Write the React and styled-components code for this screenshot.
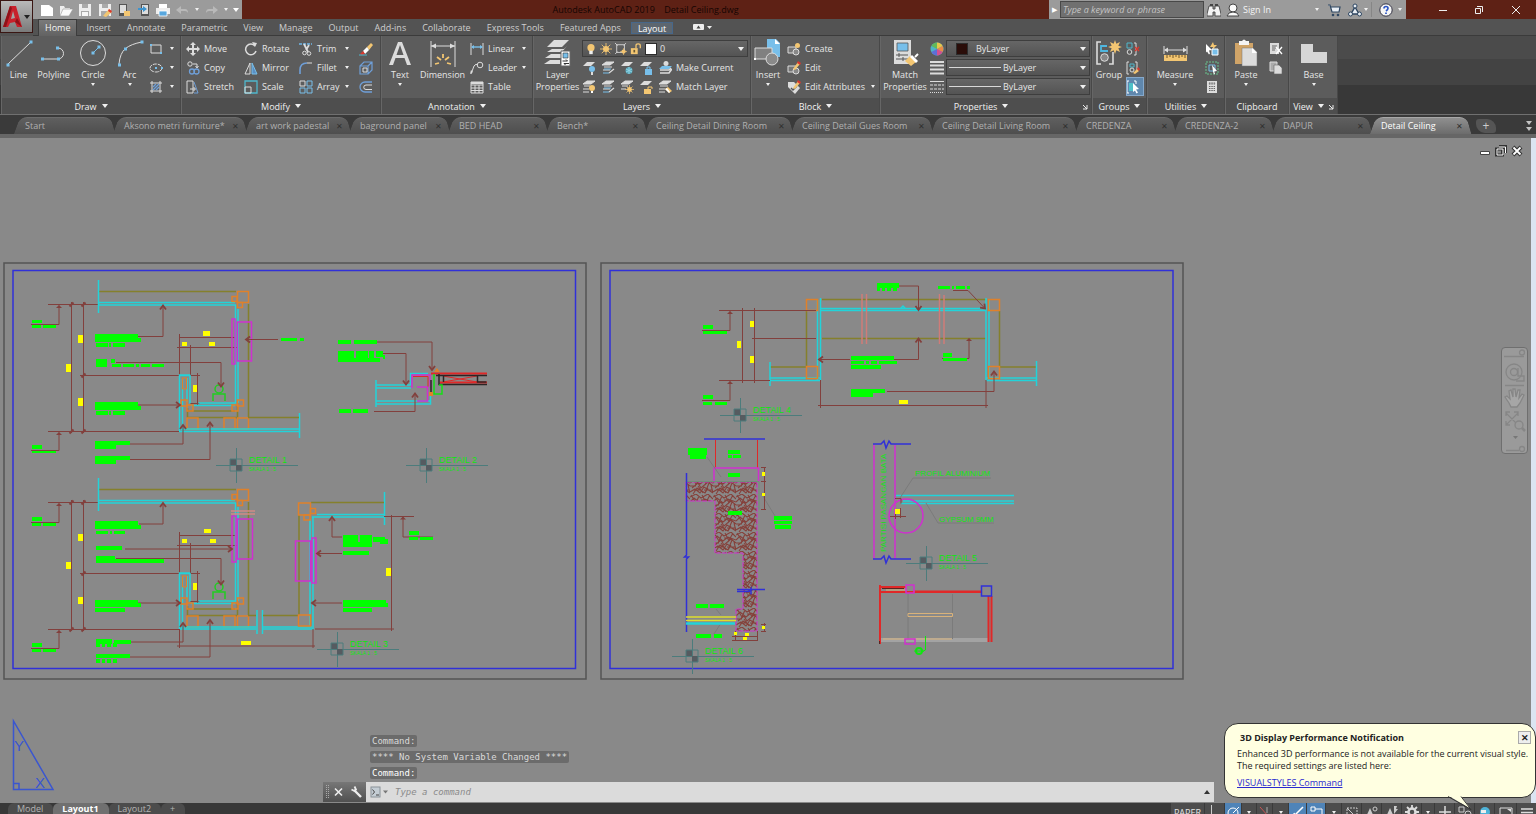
import React, { useState } from 'react';
import styled, { createGlobalStyle, css } from 'styled-components';

const GlobalStyle = createGlobalStyle`
  * {
    box-sizing: border-box;
  }

  body {
    margin: 0;
    overflow: hidden;
    font-family: 'Open Sans', 'Noto Sans', sans-serif;
    font-size: 9px;
    color: #e6e6e6;
    background: #898989;
  }

  button, input, select {
    font: inherit;
    color: inherit;
    border: 0;
    margin: 0;
    padding: 0;
    background: none;
    outline: none;
  }

  svg {
    display: block;
    flex: none;
  }
`;

const Page = styled.div`
  display: flex;
  flex-direction: column;
  height: 100vh;
  position: relative;
  overflow: hidden;
`;

/* ---------- icons ---------- */

const W = '#dcdcdc';
const B = '#78bfea';
const Y = '#f3c672';
const R = '#d8382e';

const icons = {
  // quick access
  newFile: <path d="M1 2h8l4 3v8H1z" fill="#fff" />,
  open: <><path d="M1 13V3h4l1 2h5v2" fill="#eee" /><path d="M1 13l3-7h10l-4 7z" fill="#fafafa" stroke="#999" strokeWidth=".6" /></>,
  save: <><path d="M1 1h12v12H1z" fill="#eee" /><path d="M4 1h6v4H4zM3 8h8v5H3z" fill="#aaa" /><path d="M4 9h6v4H4z" fill="#f7f7f7" /></>,
  saveAs: <><path d="M1 1h12v12H1z" fill="#eee" /><path d="M4 1h6v4H4zM3 8h8v5H3z" fill="#aaa" /><path d="M5 13l6-7 3 3-6 5z" fill={Y} /><path d="M11 6l3 2-1 2-3-2z" fill={R} /></>,
  openWeb: <><path d="M2 1h8v12H2z" fill="#555" /><path d="M3 2h6v8H3z" fill="#ddd" /><path d="M7 8h6v5H7z" fill={Y} /></>,
  saveWeb: <><path d="M4 1h8v12H4z" fill="#555" /><path d="M5 2h6v9H5z" fill="#ddd" /><path d="M1 5h5V3l4 3-4 3V7H1z" fill="#3d94cf" /></>,
  plot: <><path d="M3 1h8v4H3z" fill="#fff" /><path d="M0 5h14v6H0z" fill="#eee" /><path d="M3 8h8v5H3z" fill="#58a7de" stroke="#fff" strokeWidth=".8" /></>,
  undo: <path d="M1 7l5-4v3h4q3 0 3 4-1-2-3-2H6v3z" fill="#b9b9b9" />,
  redo: <path d="M13 7L8 3v3H4q-3 0-3 4 1-2 3-2h4v3z" fill="#b9b9b9" />,
  // draw
  rectangle: <><path d="M2 3h10v8H2z" fill="none" stroke={W} /><path d="M1 2h2v2H1zM11 10h2v2h-2z" fill={B} /></>,
  ellipse: <><ellipse cx="7" cy="7" rx="6" ry="4" fill="none" stroke={W} strokeDasharray="4 1" /><path d="M6 6h2v2H6zM12 6h2v2h-2z" fill={B} /></>,
  hatch: <><path d="M3 1v12M11 1v12M1 3h12M1 11h12" stroke={W} fill="none" /><path d="M4 10l6-6M4 7l3-3M7 10l3-3" stroke="#6f9fd8" strokeWidth="1.4" /></>,
  // modify
  move: <path d="M7 0l3 3H8v3h3V4l3 3-3 3V8H8v3h2l-3 3-3-3h2V8H3v2L0 7l3-3v2h3V3H4z" fill={W} />,
  copy: <><circle cx="4" cy="3" r="2.2" fill="none" stroke={W} /><path d="M7 3h4v3M9.5 5l1.5 2 1.5-2" fill="none" stroke={W} /><circle cx="6" cy="10.5" r="2.5" fill="none" stroke="#6f9fd8" strokeWidth="1.3" /><circle cx="10.5" cy="10.5" r="2.5" fill="none" stroke="#6f9fd8" strokeWidth="1.3" /></>,
  stretch: <><path d="M1 1h6v12H1z" fill="none" stroke={W} /><path d="M8 2l4 11H8" fill="none" stroke="#6f9fd8" /><path d="M4 9h5M7.5 7l2 2-2 2" fill="none" stroke={W} /></>,
  rotate: <><path d="M11 4a5.3 5.3 0 1 0 1 5" fill="none" stroke={W} strokeWidth="1.5" /><path d="M8 0l5 1-2 4z" fill={W} /></>,
  mirror: <><path d="M6 2v11H1z" fill="none" stroke={W} /><path d="M8 2v11h5z" fill="#5a8fc4" stroke={B} /></>,
  scale: <><path d="M1 1h12v12H1z" fill="none" stroke="#4fb7cc" strokeWidth="1.3" /><path d="M1 7h6v6H1z" fill="none" stroke={W} /></>,
  trim: <><path d="M0 2h13" stroke="#6fb7e8" strokeWidth="1.3" strokeDasharray="3 1" /><path d="M5 2l4 8M10 3L7 8" stroke={W} strokeWidth="1.8" /><circle cx="5.5" cy="11" r="1.8" fill="none" stroke={W} /><circle cx="10" cy="11.5" r="1.8" fill="none" stroke={W} /></>,
  fillet: <><path d="M1 13V9q0-7 7-7" fill="none" stroke="#6f9fd8" strokeWidth="1.6" /><path d="M8 2h5" stroke={W} /></>,
  array: <><path d="M1 1h5v5H1z" fill="none" stroke={W} /><path d="M8 1h5v5H8zM1 8h5v5H1zM8 8h5v5H8z" fill="none" stroke={B} /></>,
  erase: <><path d="M8 5l4-4 2 2-4 5z" fill={Y} /><path d="M4 9l4-4 2 3-4 4z" fill="#fff" /><path d="M1 12l3-3 2 3-3 1z" fill={R} /><path d="M0 13h8" stroke="#4fb7cc" /></>,
  explode: <><path d="M1 5h8v8H1zM1 5l4-4h8v8l-4 4M9 5l4-4" fill="none" stroke="#6f9fd8" strokeWidth="1.2" /><path d="M4 7h4v4H4z" fill="none" stroke={W} /></>,
  offset: <><path d="M13 2H6a5 5 0 0 0 0 10h7" fill="none" stroke="#6f9fd8" strokeWidth="1.3" /><path d="M13 5H7a2 2 0 0 0 0 4.5h6" fill="none" stroke={W} /></>,
  // annotation
  linear: <><path d="M1 1v12M13 1v12" stroke={W} /><path d="M2 5h10" stroke={B} strokeWidth="1.4" /><path d="M1 5l3-2v4zM13 5l-3-2v4z" fill={B} /></>,
  leader: <><path d="M1 13l3-8q2-3 4-1" fill="none" stroke={W} /><circle cx="10" cy="4" r="2.8" fill="none" stroke={W} /><path d="M0 13l1-4 2 2z" fill={W} /></>,
  table: <><path d="M1 2h12v11H1zM1 5h12M1 8h12M1 10.5h12M5 5v8M9 5v8" fill="none" stroke={W} /><path d="M1 2h12v2H1z" fill={W} /></>,
  // layer tools
  layIso: <><path d="M5 1h8l-4 4H1z" fill={W} /><circle cx="10" cy="8" r="3" fill={B} /><path d="M9 11h2v3H9z" fill={W} /></>,
  layMatch: <><path d="M5 1h8l-4 3H1zM3 6h8M2 9h7" fill={W} stroke={W} /><path d="M2 12h6M3 8h7" stroke={B} /><path d="M8 12l5-4" stroke={W} strokeWidth="1.3" /></>,
  layFreeze: <><path d="M5 1h8l-4 4H1z" fill={W} /><circle cx="9" cy="9.5" r="3.5" fill="#5aa5b8" /><path d="M9 6v7M6 8l6 3M6 11l6-3" stroke="#8fd5e6" /></>,
  layLock: <><path d="M5 1h8l-4 4H1z" fill={W} /><path d="M6 8h7v6H6z" fill={B} /><path d="M8 8V6h3v2" fill="none" stroke={B} /></>,
  layMake: <><circle cx="8" cy="2.5" r="2.5" fill={W} /><path d="M4 5h10l-3 3H1z" fill={B} /><path d="M2 9h9l2-2M2 12h9l3-4" fill="none" stroke={W} strokeWidth="1.6" /></>,
  layOn: <><path d="M5 1h8l-4 3H1zM2 6h6M1 9h6M1 12h6" fill={W} stroke={W} /><circle cx="10" cy="8" r="3" fill={Y} /><path d="M9 11h2v2H9z" fill="#fff" /></>,
  layThaw: <><path d="M5 1h8l-4 3H1zM2 6h6M1 9h5" fill={W} stroke={W} /><circle cx="9.5" cy="9.5" r="2.4" fill={Y} /><path d="M9.5 5v9M5 9.5h9M6.5 6.5l6 6M12.5 6.5l-6 6" stroke={Y} strokeWidth=".7" /></>,
  layUnlock: <><path d="M5 1h8l-4 4H1z" fill={W} /><path d="M5 9h7v5H5z" fill={Y} /><path d="M9 9V7h4v2" fill="none" stroke={Y} /></>,
  layMatch2: <><path d="M5 1h8l-4 3H1zM2 6h8M1 9h6M1 12h6" fill={W} stroke={W} /><path d="M7 9l3-2 4 4-3 2z" fill={Y} /><path d="M7 9l2-1 3 4-1 1z" fill="#fff" /></>,
  bulb: <><circle cx="7" cy="5.5" r="4.2" fill={Y} /><path d="M5 9h4v4H5z" fill="#eee" /></>,
  sun: <><circle cx="7" cy="7" r="3.5" fill={Y} /><path d="M7 0v14M0 7h14M2 2l10 10M12 2L2 12" stroke={Y} /></>,
  vpFreeze: <><path d="M2 2h9v9H2zM0 0l3 3M13 0l-3 3M0 13l3-3" fill="none" stroke={W} /><circle cx="10" cy="10" r="2.5" fill={Y} /><path d="M10 6v8M6 10h8" stroke={Y} strokeWidth=".8" /></>,
  unlock: <><path d="M1 6h8v7H1z" fill={Y} /><path d="M7 6V3q0-2 2.5-2T12 3v3" fill="none" stroke={Y} strokeWidth="1.5" /><path d="M4 8h2v3H4z" fill="#6b5a33" /></>,
  // block
  create: <><path d="M1 5h8v6H1z" fill="#777" stroke={W} /><circle cx="9" cy="10" r="3" fill="#888" stroke={W} /><circle cx="10.5" cy="3.5" r="2.5" fill={Y} /></>,
  edit: <><path d="M1 5h8v6H1z" fill="#777" stroke={W} /><circle cx="9" cy="10" r="3" fill="#888" stroke={W} /><path d="M6 8l5-7 2 2-5 6z" fill={Y} /><path d="M11 0l3 2-1 2-3-2z" fill={R} /></>,
  editAttr: <><path d="M1 2h6l6 6-5 6-7-7z" fill={W} /><path d="M4 8l2 2 4-4" fill="none" stroke="#555" strokeWidth="1.4" /><path d="M6 8l5-7 2 2-5 6z" fill={Y} /><path d="M11 0l3 2-1 2-3-2z" fill={R} /></>,
  // properties
  wheel: <><circle cx="7" cy="7" r="6.5" fill="#4fb3c8" /><path d="M7 7V.5A6.5 6.5 0 0 1 12.6 4z" fill="#e6c64b" /><path d="M7 7l5.6-3a6.5 6.5 0 0 1 0 6z" fill="#ea8a45" /><path d="M7 7l5.6 3A6.5 6.5 0 0 1 7 13.5z" fill="#d4508f" /><path d="M7 7v6.5A6.5 6.5 0 0 1 1.4 10z" fill="#5e6fd6" /><path d="M7 7L1.4 4A6.5 6.5 0 0 1 7 .5z" fill="#62b85a" /></>,
  weight: <path d="M0 1h14M0 4.5h14M0 8.5h14M0 12.5h14" stroke={W} strokeWidth="2" />,
  ltype: <><path d="M0 1.5h14" stroke={W} /><path d="M0 5h14M0 9h14" stroke={W} strokeDasharray="3 1" /><path d="M0 12.5h14" stroke={W} strokeDasharray="1 1" /></>,
  // groups
  ungroup: <><path d="M1 1h5v5H1z" fill="none" stroke="#4fb7cc" /><circle cx="3.5" cy="10" r="2.3" fill="none" stroke={W} /><path d="M8 1h2v12H8" fill="none" stroke={W} /><path d="M9 5l4 4M13 5L9 9" stroke={R} strokeWidth="1.4" /></>,
  groupEdit: <><path d="M3 1H1v12h2M9 1h2v8" fill="none" stroke={W} /><path d="M4 3h4v3H4z" fill="none" stroke="#4fb7cc" /><circle cx="6" cy="9" r="2" fill="none" stroke={W} /><path d="M7 12l4-4 2 2-4 3z" fill={Y} /><path d="M11 8l1-2 2 2-1 2z" fill={R} /></>,
  groupPick: <><path d="M3 1H1v12h2M8 1h2v3" fill="none" stroke="#fff" /><path d="M3 3h4v8H3z" fill="#4fc0c8" /><path d="M7 3l6 6-3 .5 2 3-1.5 1-1.5-3L7 12z" fill="#fff" /></>,
  // utilities
  quickSel: <><path d="M1 2l6 6-3 .5 1 3-1 1-2-3-1 1z" fill="#fff" /><path d="M8 0L5 5h3L7 8l5-5H9z" fill={Y} /><path d="M7 7h6v6H7z" fill={B} stroke="#fff" /></>,
  selAll: <><path d="M1 1h12v12H1z" fill="none" stroke="#67c58e" strokeDasharray="2 1" /><path d="M4 4h6v6H4z" fill="none" stroke={B} /><path d="M7 4l5 6-3 .5 1 2-1 1-1-3z" fill="#fff" /></>,
  calc: <><path d="M2 1h10v12H2z" fill={W} /><path d="M4 3h6v1H4zM4 6.5h6M4 8.5h6M4 10.5h6" stroke="#666" fill="none" strokeDasharray="1.5 .8" /></>,
  // clipboard
  cut: <><path d="M1 1h9v11H1z" fill={W} /><path d="M3 4h5M3 6h4M3 8h3" stroke="#666" /><path d="M7 5l6 7M13 5l-6 7" stroke="#fff" strokeWidth="1.3" /></>,
  copyClip: <><path d="M1 1h7v9H1z" fill="#aaa" stroke={W} /><path d="M5 4h5l3 3v6H5z" fill={W} stroke="#666" strokeWidth=".6" /></>,
  // info center
  find: <><path d="M2 3h4v3h2V3h4l2 8v2H8V9H6v4H0v-2z" fill="#f2f2f2" stroke="#444" strokeWidth=".9" /><path d="M3 1h3v2H3zM8 1h3v2H8z" fill="#444" /></>,
  user: <><circle cx="7" cy="5" r="4" fill="#fafafa" stroke="#444" /><path d="M1 13q1-4 6-4t6 4z" fill="#fafafa" stroke="#444" /></>,
  cart: <><path d="M1 2h2l2 7h7l1-5H4" fill="#e8eef4" stroke="#2e4661" strokeWidth="1.2" /><circle cx="6" cy="12" r="1.3" fill="#2e4661" /><circle cx="11" cy="12" r="1.3" fill="#2e4661" /></>,
  a360: <><path d="M7 4l4 7H3z" fill="#e8eef4" stroke="#2e4661" strokeWidth="1.4" /><circle cx="7" cy="3" r="2" fill="#e8eef4" stroke="#2e4661" /><circle cx="2.5" cy="11" r="2" fill="#e8eef4" stroke="#2e4661" /><circle cx="11.5" cy="11" r="2" fill="#e8eef4" stroke="#2e4661" /></>,
  help: <><circle cx="7" cy="7" r="6.2" fill="#f6f6f6" stroke="#334" /><path d="M5 5.5q0-2 2-2t2 1.7Q9 6.5 7 8M7 9.5v1.5" fill="none" stroke="#2c55c4" strokeWidth="1.7" /></>,
  // big ribbon icons
  line: <><path d="M3 25L26 3" stroke={W} fill="none" /><path d="M1.5 24.5h3v3h-3zM24.5 1.5h3v3h-3z" fill={B} /></>,
  polyline: <><path d="M2 20h16a5.5 5.5 0 0 0 0-11" fill="none" stroke={W} /><path d="M1 18.5h3v3H1zM17 18.5h3v3h-3zM16 7.5h3v3h-3z" fill={B} /></>,
  circle: <><circle cx="14" cy="14" r="12.5" fill="none" stroke={W} /><path d="M14 14l6-6" stroke={B} /><path d="M12.5 12.5h3v3h-3zM18.5 6.5h3v3h-3z" fill={B} /></>,
  arc: <><path d="M3 25Q4 14 9.5 9.5T26 3" fill="none" stroke={W} /><path d="M2 24.5h3v3H2zM8 8.5h3v3H8zM24.5 1.5h3v3h-3z" fill={B} /></>,
  text: <path d="M12 3h4l9 23h-4l-2.5-7h-9L7 26H3zM10.5 16h7L14 6z" fill={W} />,
  dimension: <><path d="M2 2v26M26 2v26M2 7h24" stroke={W} fill="none" /><path d="M2 7l5-2.5v5zM26 7l-5-2.5v5z" fill={W} /><path d="M6 25l4-1M8 18l4 3M14 15v4M20 18l-4 3M22 25l-4-1" stroke={Y} strokeWidth="1.8" /></>,
  layerProps: <><path d="M10 1h15l-7 7H3z" fill={W} /><path d="M8 10h12l3-3-5 6H3zM7 15h10v4H1zM6 21h10v4H0z" fill={W} /><path d="M17 12h9v15h-9z" fill="#fff" stroke="#666" /><path d="M19 14h5v5h-5z" fill={B} stroke="#333" strokeWidth=".6" /><path d="M18.5 22h5l-1.5-1.5M25 24.5h-5l1.5 1.5" fill="none" stroke="#333" /></>,
  insert: <><path d="M13 0h9l4 4v14H13z" fill={B} /><path d="M21 0l5 5h-5z" fill="#fff" /><path d="M1 9h17v11H1z" fill="#808080" stroke={W} /><circle cx="18" cy="20" r="6" fill="#8a8a8a" stroke={W} /><path d="M0 19h2v2H0z" fill="#fff" /></>,
  matchProps: <><path d="M3 1h17v24H3z" fill={W} /><path d="M6 4h11v8H6z" fill={B} stroke="#555" strokeWidth=".8" /><path d="M5 16h12M5 20h12M8 14v4M12 18v4" stroke="#555" /><path d="M14 22l5-5 6 6-5 4z" fill={Y} /><path d="M19 18l6 6 2-2-6-6z" fill="#fff" /><path d="M24 18l3-3" stroke="#fff" strokeWidth="2" /></>,
  group: <><path d="M6 3H2v22h4M14 25h4V13" fill="none" stroke={W} strokeWidth="1.6" /><path d="M12 7H6v5h7" fill="none" stroke="#4fb7e0" strokeWidth="1.8" /><circle cx="9.5" cy="18.5" r="3.8" fill="#888" stroke={W} /><path d="M20 1l1.3 3.7L25 3l-1.700 3.700L27 8l-3.700 1.300L25 13l-3.700-1.700L20 15l-1.300-3.700L15 13l1.700-3.700L13 8l3.700-1.300L15 3l3.700 1.700z" fill={Y} /></>,
  measure: <><path d="M3 7v8M26 7v8M4 11h21" stroke={W} /><path d="M3 11l4-2.5v5zM26 11l-4-2.5v5z" fill={W} /><path d="M3 16h23v6H3z" fill={Y} /><path d="M6 16v3M9 16v2M12 16v3M15 16v2M18 16v3M21 16v2M24 16v3" stroke="#705426" /></>,
  paste: <><path d="M3 4h18v21H3z" fill="#d0a468" /><path d="M7 2h3q2-3 4 0h3v4H7z" fill="#f4f4f4" /><path d="M10 9h11l4 4v14H10z" fill={W} stroke="#777" strokeWidth=".5" /><path d="M20 9v5h5z" fill="#fff" /></>,
  base: <path d="M1 5h12v8h14v11H1z" fill="#d6d6d6" />,
};

const Icon = ({ name, size = 14 }) => {
  const box = size > 20 ? 28 : 14;
  return (
    <svg width={size} height={size} viewBox={`0 0 ${box} ${box}`} aria-hidden="true">
      {icons[name]}
    </svg>
  );
};

const Caret = styled.span`
  flex: none;
  width: 0;
  height: 0;
  border: ${(p) => p.$size || 2}px solid transparent;
  border-top: ${(p) => (p.$size || 2) + 1}px solid ${(p) => p.$color || '#f0f0f0'};
  border-bottom: 0;
`;

/* ---------- title bar ---------- */

const Header = styled.header`
  display: grid;
  grid-template-columns: 33px 1fr;
  grid-template-rows: 19px 17px;
  background: #535353;
`;

const AppButton = styled.button`
  grid-row: 1 / 3;
  height: 33px;
  display: flex;
  align-items: center;
  justify-content: center;
  gap: 1px;
  background: linear-gradient(#b9b9b9, #7a7a7a);
  border: 1px solid #3a1613;
`;

const TitleBar = styled.div`
  display: flex;
  align-items: stretch;
  background: #5e2115;
`;

const QuickAccess = styled.div`
  display: flex;
  align-items: center;
  gap: 4px;
  width: 209px;
  padding: 0 3px 0 6px;
  background: #9b9b9b;
`;

const QuickButton = styled.button`
  display: flex;
  align-items: center;
  justify-content: center;
  width: ${(p) => (p.$narrow ? 6 : 16)}px;
`;

const WindowTitle = styled.h1`
  flex: 1;
  margin: 0;
  text-align: center;
  font-size: 9px;
  font-weight: 400;
  line-height: 19px;
  white-space: pre;
  color: #150503;
`;

const InfoCenter = styled.div`
  display: flex;
  align-items: center;
  width: 357px;
  background: #9b9b9b;
`;

const SearchToggle = styled.button`
  width: 11px;
  height: 19px;
  font-size: 7px;
  color: #fff;
`;

const SearchInput = styled.input`
  width: 144px;
  height: 17px;
  padding: 0 2px;
  font-style: italic;
  background: #707070;
  border: 1px solid #484848;

  &::placeholder {
    color: #c4c4c4;
    opacity: 1;
  }
`;

const InfoButton = styled.button`
  display: flex;
  align-items: center;
  justify-content: ${(p) => (p.$split ? 'space-between' : 'center')};
  width: ${(p) => p.$w || 19}px;
  height: ${(p) => (p.$h || 19)}px;
  padding: ${(p) => (p.$split ? '0 4px 0 7px' : 0)};
  border-left: ${(p) => (p.$split ? '1px solid #868686' : 0)};
  color: #f5f5f5;
`;

const SignIn = styled.button`
  flex: 1;
  display: flex;
  align-items: center;
  justify-content: space-between;
  padding: 0 4px 0 1px;
  color: #f5f5f5;
`;

const WindowButtons = styled.div`
  display: flex;
  width: 130px;
  padding: 0 2px 0 19px;

  button {
    flex: 1;
    display: flex;
    align-items: center;
    justify-content: center;
  }
`;

const RibbonTabs = styled.nav`
  display: flex;
  align-items: stretch;
  gap: 2px;
  padding-left: 5px;
  border-bottom: 1px solid #3b3b3b;
`;

const RibbonTab = styled.button`
  padding: 0 6px;
  line-height: 16px;
  color: #cecece;
  white-space: nowrap;
  border: 1px solid transparent;
  border-bottom: 0;
  ${(p) => p.$active && css`
    color: #f4f4f4;
    background: linear-gradient(#7a7a7a, #626262);
    border-color: #3c3c3c;
    margin-bottom: -1px;
  `}
  ${(p) => p.$context && css`
    color: #fff;
    line-height: 12px;
    margin: 3px 8px 1px 1px;
    background: #5d666f;
    border: 1px solid #47678a;
  `}
`;

/* ---------- ribbon ---------- */

const Ribbon = styled.div`
  display: flex;
  height: 79px;
  padding-left: 1px;
  background: linear-gradient(#4b4b4b 0 23px, #434343 23px 49px, #383838 49px);
  border-bottom: 1px solid #707070;
`;

const Panel = styled.section`
  display: flex;
  flex-direction: column;
  width: ${(p) => p.$w}px;
  flex: none;
  background: #5c5c5c;
  border-right: 1px solid #484848;
  border-left: 1px solid #666;
`;

const PanelBody = styled.div`
  flex: 1;
  display: flex;
  align-items: flex-start;
  padding-top: 3px;
`;

const PanelTitle = styled.button`
  position: relative;
  display: flex;
  align-items: center;
  justify-content: center;
  gap: 5px;
  height: 16px;
  padding-right: ${(p) => (p.$launcher ? 10 : 0)}px;
  background: #4e4e4e;
  color: #f0f0f0;
`;

const Launcher = styled.svg`
  position: absolute;
  right: 3px;
  top: 6px;
`;

const BigTool = styled.button`
  width: ${(p) => p.$w}px;
  flex: none;
  display: flex;
  flex-direction: column;
  align-items: center;
  line-height: 12px;
  white-space: pre;

  span {
    margin-top: 2px;
  }
`;

const ToolColumn = styled.div`
  display: flex;
  flex-direction: column;
  width: ${(p) => p.$w}px;
  flex: none;
  margin-left: ${(p) => p.$ml || 0}px;
`;

const Tool = styled.button`
  display: flex;
  align-items: center;
  gap: 4px;
  height: 19px;
  white-space: nowrap;
  ${(p) => p.$on && css`
    background: #5f87ad;
    outline: 1px solid #86a9cb;
    outline-offset: -1px;
  `}

  ${Caret} {
    margin-left: auto;
  }
`;

const ToolRow = styled.div`
  display: flex;
  gap: 5px;
`;

const Combo = styled.div`
  display: flex;
  align-items: center;
  gap: ${(p) => p.$gap || 3}px;
  height: 17px;
  margin: 1px 0;
  padding: 0 3px 0 ${(p) => p.$pl || 2}px;
  background: linear-gradient(#666, #545454);
  border: 1px solid #3e3e3e;

  select {
    flex: 1;
    min-width: 0;
    appearance: none;
  }
`;

const Swatch = styled.span`
  width: 12px;
  height: 12px;
  background: ${(p) => p.$color};
  border: 1px solid #2c2c2c;
`;

const Rule = styled.span`
  width: 52px;
  height: 1px;
  background: #d8d8d8;
`;

/* ---------- file tabs ---------- */

const FileTabs = styled.nav`
  display: flex;
  height: 23px;
  padding: 2px 4px 0 16px;
  background: #3a3a3a;
  border-bottom: 4px solid #666;
`;

const FileTab = styled.div`
  position: relative;
  display: flex;
  align-items: center;
  justify-content: space-between;
  width: ${(p) => p.$w}px;
  flex: none;
  padding: 0 8px 0 9px;
  color: ${(p) => (p.$active ? '#fff' : '#b0b0b0')};
  white-space: nowrap;

  &::before,
  &::after {
    content: '';
    position: absolute;
    top: 0;
    bottom: 0;
    background: ${(p) => (p.$active ? 'linear-gradient(#8f8f8f, #6c6c6c)' : 'linear-gradient(#5f5f5f, #4e4e4e)')};
    border-top: 1px solid ${(p) => (p.$active ? '#a8a8a8' : '#6b6b6b')};
  }
  &::before {
    left: 1px;
    right: 20px;
    border-radius: 7px 0 0 0;
    transform: skewX(-20deg);
  }
  &::after {
    right: 2px;
    width: 40px;
    border-radius: 0 7px 0 0;
    transform: skewX(16deg);
  }

  button {
    position: relative;
    z-index: 1;
  }
`;

const CloseTab = styled.button`
  font-size: 8px;
  line-height: 10px;
  color: #303030;
`;

const AddTab = styled.button`
  width: 20px;
  height: 14px;
  margin: 2px 0 0 5px;
  font-size: 12px;
  line-height: 12px;
  color: #ccc;
  background: #555;
  border-radius: 3px 9px 3px 9px;
`;

const TabOverflow = styled.button`
  margin-left: auto;
  display: flex;
  flex-direction: column;
  justify-content: center;
  gap: 2px;
`;

/* ---------- drawing area ---------- */

const Workspace = styled.main`
  flex: 1;
  min-height: 0;
  position: relative;
  background: #898989;
  border-right: 5px solid #dbe5f2;
  overflow: hidden;
`;

const Drawing = styled.svg`
  width: 100%;
  height: 100%;
`;

const DocButtons = styled.div`
  position: absolute;
  top: 7px;
  right: 8px;
  display: flex;
  gap: 4px;
`;

const NavBar = styled.div`
  position: absolute;
  top: 209px;
  right: 3px;
  width: 27px;
  height: 107px;
  background: #9a9a9a;
  border: 1px solid #6f6f6f;
  border-radius: 4px;
`;

const CommandDock = styled.div`
  position: absolute;
  left: 323px;
  right: 317px;
  bottom: 1px;
  font-family: 'DejaVu Sans Mono', 'Liberation Mono', monospace;
`;

const History = styled.div`
  display: flex;
  flex-direction: column;
  align-items: flex-start;
  gap: 4px;
  margin: 0 0 3px 47px;
`;

const HistoryLine = styled.code`
  padding: 0 2px;
  font: inherit;
  line-height: 12px;
  white-space: pre;
  color: ${(p) => (p.$last ? '#fff' : '#dadada')};
  background: #6b6b6b;
  border-radius: 2px;
`;

const CommandBar = styled.div`
  display: flex;
  align-items: center;
  height: 20px;
  background: linear-gradient(#777, #505050);

  input {
    flex: 1;
    align-self: stretch;
    padding: 0 4px;
    font-style: italic;
    color: #333;
  }
  input::placeholder {
    color: #8b8b8b;
    opacity: 1;
  }
`;

const CommandField = styled.div`
  flex: 1;
  align-self: stretch;
  display: flex;
  align-items: center;
  gap: 3px;
  padding: 0 4px;
  background: #dbdbdb;
`;

/* ---------- status bar ---------- */

const StatusBar = styled.footer`
  display: flex;
  align-items: flex-start;
  justify-content: space-between;
  height: 11px;
  overflow: hidden;
  background: #383838;
  padding-left: 8px;
`;

const StatusGroup = styled.div`
  display: flex;
`;

const LayoutTab = styled.button`
  height: 15px;
  padding: 0 10px 3px 9px;
  line-height: 12px;
  color: ${(p) => (p.$active ? '#fff' : '#b4b4b4')};
  font-weight: ${(p) => (p.$active ? 700 : 400)};
  background: ${(p) => (p.$active ? '#707070' : '#4c4c4c')};
  border-radius: 6px 6px 0 0;
`;

const StatusButton = styled.button`
  display: flex;
  align-items: center;
  justify-content: center;
  width: ${(p) => p.$w || 20}px;
  height: 18px;
  color: #e4e4e4;
  background: ${(p) => (p.$on ? '#4f84b8' : '#4d4d4d')};
  border-left: 1px solid #3a3a3a;
`;

const Balloon = styled.aside`
  position: absolute;
  right: 0;
  bottom: 16px;
  width: 312px;
  padding: 6px 11px 8px 12px;
  color: #222;
  background: #ffffe1;
  border: 1px solid #333;
  border-radius: 14px;

  p {
    margin: 0;
    line-height: 12px;
    white-space: nowrap;
  }
  a {
    display: block;
    margin-top: 5px;
    line-height: 12px;
    color: #2a2ad0;
  }
`;

const BalloonHead = styled.div`
  display: flex;
  align-items: center;
  justify-content: space-between;
  height: 15px;
  margin: 0 -7px 3px 3px;
  font-weight: 700;

  button {
    width: 13px;
    height: 13px;
    font-size: 9px;
    line-height: 10px;
    background: #eee;
    border: 1px solid #aaa;
    font-weight: 700;
  }
`;

const BalloonTail = styled.svg`
  position: absolute;
  left: 222px;
  top: 100%;
  margin-top: -1px;
`;

/* ---------- drawing parts ---------- */

const BROWN = '#82403d';
const CYAN = '#22d3d9';
const OLIVE = '#85802c';
const ORANGE = '#e0812a';
const MAGENTA = '#cf30cf';
const GREEN = '#00ff00';
const TEXT_GREEN = '#0fe60f';
const BLUE = '#3030d8';

const Blocks = ({ list, fill = GREEN }) => list.map(([x, y, w, h]) => (
  <rect key={`${x}-${y}`} x={x} y={y} width={w} height={h} fill={fill} />
));

const Boxes = ({ list, stroke = ORANGE }) => list.map(([x, y, w, h]) => (
  <rect key={`${x}-${y}`} x={x} y={y} width={w} height={h} fill="none" stroke={stroke} strokeWidth="1.5" />
));

const Lines = ({ d, stroke, width = 1, dash }) => (
  <path d={d} fill="none" stroke={stroke} strokeWidth={width} strokeDasharray={dash} />
);

const Leaders = ({ list, head = 'arrow' }) => list.map((d) => (
  <path key={d} d={d} fill="none" stroke={BROWN} markerEnd={`url(#${head})`} />
));

const Marker = ({ x, y, n }) => (
  <g>
    <path d={`M${x - 20} ${y + 0.5}h82M${x + 0.5} ${y - 17}v35`} stroke="#4c7c7c" />
    <path d={`M${x - 6} ${y - 6}h6v6h-6zM${x} ${y}h6v6h-6z`} fill="#555b60" />
    <path d={`M${x - 6} ${y - 6}h12v12h-12z`} fill="none" stroke="#4c7c7c" />
    <text x={x + 13} y={y - 2} fontSize="9" fill={TEXT_GREEN}>DETAIL {n}</text>
    <text x={x + 13} y={y + 6} fontSize="5" fill={TEXT_GREEN}>SKALA 1 : 5</text>
  </g>
);

// Wall niche section, shared by details 1 and 3
const Niche = ({ dy = 0 }) => (
  <g transform={`translate(0 ${dy})`}>
    <Lines stroke={BROWN} d="M48 304.500h50M48 431.500h131M71.500 302v131M83.500 302v131M80 375.500h120M179 337.500h56M177 347.500h60M179.500 334v41M190.500 345v30M197.500 373v32M190 403.500h10" />
    <Leaders head="level" list={['M31 324.500h28v-19', 'M31 450.500h28v-18']} />
    <Lines stroke={BROWN} width={2} d="M69.500 306.500l4-4M81.500 306.500l4-4M69.500 433.500l4-4M81.500 433.500l4-4M81.500 377.500l4-4" />
    <Lines stroke={OLIVE} width={1.5} d="M99 291.500h137M248.500 304v113M187 411h48M187 417.500h50M187.500 408v10M237.500 405v14" />
    <Lines stroke={CYAN} width={1.5} d="M98.500 280v33M98 302.500h137M98 305h138M235.500 305v98h-37M238 309v94M179.500 431V375.500h10.500v28M182.500 431v-52M187 378v24M191 405.500h44M179 375h11" />
    <Boxes list={[[237.5, 291.5, 11, 11], [232, 296.5, 5, 5], [237.5, 302.5, 5, 5], [181, 400, 6, 6], [187, 405, 6, 6], [232, 405, 6, 6], [237.5, 400, 6, 6], [187, 418, 11, 11], [224, 418, 11, 11], [237.5, 418, 11, 11]]} />
    <Lines stroke={ORANGE} d="M182.500 378h4v11h-4z" />
    <Lines stroke="#22cc22" width={1.5} d="M213 401v-7h12v7" />
    <circle cx="219" cy="389" r="4" fill="none" stroke="#22cc22" strokeWidth="1.5" />
  </g>
);

const zig = (x, y) => `M${x} ${y}h8l3-3 2 7 3-7 2 3h20`;

const Sheets = () => (
  <g fontFamily="'Liberation Sans', sans-serif">
    <defs>
      <marker id="arrow" markerUnits="userSpaceOnUse" markerWidth="10" markerHeight="10" refX="7" refY="5" orient="auto">
        <path d="M3 2l4 3-4 3" fill="none" stroke={BROWN} strokeWidth="1.8" />
      </marker>
      <marker id="level" markerUnits="userSpaceOnUse" markerWidth="10" markerHeight="10" refX="7" refY="5" orient="auto">
        <path d="M4.500 2L7.500 5l-3 3z" fill={BROWN} />
      </marker>
      <pattern id="stone" width="23" height="19" patternUnits="userSpaceOnUse">
        <path
          d="M0 3l6-3 5 4 7-4 5 5M0 8l4-4 6 5 5-4 8 3M2 13l6-5 3 5 7-6 5 4M0 17l5-3 5 4 4-6 9 6M3 19l4-6 8 5 3-5M1 1l5 8M9 2l-4 9M12 1l4 8M20 1l-5 9M8 11l5 7M19 8l-4 10M21 10l2 8M0 11h6M11 6h7M4 15h7M14 15h8"
          fill="none"
          stroke="#85403a"
          strokeWidth="1.1"
        />
      </pattern>
    </defs>

    <Boxes stroke="#545454" list={[[4, 263, 582, 416], [601, 263, 582, 416]]} />
    <Boxes stroke={BLUE} list={[[13, 270.5, 562.5, 398], [610, 270.5, 563, 398]]} />

    {/* Detail 1 */}
    <Niche />
    <Lines stroke={CYAN} width={1.5} d="M179 429h120M179 431.500h120M299.500 413v25" />
    <Lines stroke={OLIVE} width={1.5} d="M248 417.500h51" />
    <Boxes stroke={MAGENTA} list={[[232, 319, 3, 45], [237.5, 322, 14, 39]]} />
    <Leaders list={['M137 336.500h26v-31', 'M116 362.500h105v24', 'M138 405h42', 'M130 444h53v-19', 'M130 459.500h80v-37', 'M278 339.500h-32']} />
    <Blocks list={[
      [32, 320, 10, 3], [32, 325, 9, 3], [43, 325, 13, 3], [32, 445, 10, 4], [32, 451, 24, 2],
      [95, 334, 43, 5], [95, 338, 46, 4], [96, 343, 12, 4], [109, 343, 2, 4], [113, 343, 12, 4],
      [96, 359, 11, 8], [111, 359, 4, 4], [112, 364, 9, 3], [123, 364, 11, 3], [136, 364, 3, 3], [141, 364, 9, 3], [152, 364, 12, 3],
      [95, 402, 43, 5], [95, 406, 46, 4], [96, 411, 12, 4], [109, 411, 2, 4], [113, 411, 12, 4],
      [95, 441, 35, 4], [95, 445, 21, 4], [95, 456, 35, 4], [95, 460, 21, 4],
      [281, 338, 16, 3], [300, 338, 4, 3],
    ]} />
    <Blocks fill="#ffff00" list={[[78, 335, 5, 8], [66, 364, 5, 8], [78, 398, 5, 8], [203, 331, 7, 5], [182, 342, 5, 4], [209, 342, 6, 4], [193, 385, 4, 7]]} />
    <Marker x={236} y={465} n={1} />

    {/* Detail 2 */}
    <Lines stroke={CYAN} width={1.5} d="M376 380v27M376 385h34.500V373.500H428M376 388h35M376 401h54M376 404h54.500v-10" />
    <Lines stroke={MAGENTA} width={1.5} d="M412 388v-13h18v12M417 387h10.500v14H417" />
    <Lines stroke="#e02828" d="M413 376.500h15v10" />
    <Lines stroke="#e02828" width={2} d="M431 373.500h56M440 382.500h47" />
    <Lines stroke="#e02828" d="M443 376l34 6M443 382l34-6" />
    <Lines stroke="#2c2525" width={1.5} d="M431 380v12M439 374v10.500h48M443.500 376v6M436 375.500h51M477.500 376v6h9" />
    <Lines stroke="#16e016" width={1.5} d="M434 374v20h8v-9h-3" />
    <path d="M434 372l3-4 3 4zM429 392h4v4h-4z" fill={ORANGE} />
    <Leaders list={['M377 342h55v28', 'M383 353.500h23v31', 'M374 411.500h41v-18']} />
    <Blocks list={[[338, 340, 13, 4], [354, 340, 23, 4], [338, 351, 16, 8], [356, 351, 12, 7], [369, 351, 5, 7], [376, 351, 7, 6], [338, 358, 42, 4], [383, 355, 2, 4], [339, 409, 12, 4], [353, 409, 15, 4]]} />
    <Marker x={426} y={465} n={2} />

    {/* Detail 3 */}
    <Niche dy={198} />
    <Lines stroke={CYAN} width={1.5} d="M179 627h77M263 627h49M179 629h77M263 629h50V517M310 519v108M312 517h72M317 514.500h67M384.500 492v33M257 610v24M262.500 610v24" />
    <Lines stroke={OLIVE} width={1.5} d="M248 615.500h8M263 615.500h36M299 515v100M311 502.500h73" />
    <Boxes list={[[298.5, 503, 12, 12], [310.5, 508.5, 5, 5], [304, 515, 6, 5], [298.5, 615, 12, 11]]} />
    <Boxes stroke={MAGENTA} list={[[232, 516, 4, 46], [237.5, 519, 15, 40], [295.5, 541, 15, 40], [312, 538, 4, 45]]} />
    <Lines stroke="#cf8a85" width={1.5} d="M231 511h24M231 514h24" />
    <Lines stroke={BROWN} d="M179.500 629v19M313 629v19M177 646h138M391.500 515v116M384 516.500h30M315 629h79" />
    <Leaders list={['M139 524h24v-21', 'M125 549h107', 'M116 558.500h105v26', 'M138 603h42', 'M131 642h52v-19', 'M130 657h80v-37', 'M342 537h-10v-20', 'M342 553.500h-25', 'M342 603h-30']} />
    <Leaders head="level" list={['M433 537h-30v-20']} />
    <Blocks list={[
      [32, 517, 10, 4], [32, 523, 9, 3], [43, 523, 13, 3], [32, 643, 10, 4], [32, 649, 9, 3], [43, 649, 13, 3],
      [95, 521, 43, 5], [95, 525, 46, 4], [96, 531, 12, 3], [110, 531, 2, 3], [114, 531, 11, 3],
      [96, 546, 26, 4], [96, 556, 19, 4], [96, 559, 68, 4],
      [95, 600, 43, 5], [95, 603, 46, 4], [95, 608, 30, 4],
      [96, 639, 16, 5], [114, 640, 17, 4], [96, 643, 4, 4], [102, 643, 3, 4], [107, 643, 4, 4], [113, 643, 4, 4],
      [96, 654, 34, 4], [96, 659, 4, 4], [102, 659, 3, 4], [107, 659, 4, 4], [113, 659, 4, 4],
      [343, 535, 15, 8], [360, 535, 12, 8], [373, 537, 12, 5], [380, 539, 8, 5], [343, 542, 29, 5],
      [343, 551, 26, 4], [343, 600, 43, 5], [343, 603, 45, 4], [343, 608, 29, 4],
      [409, 531, 10, 4], [409, 537, 9, 3], [420, 537, 13, 3],
    ]} />
    <Blocks fill="#ffff00" list={[[78, 534, 5, 7], [66, 562, 5, 7], [78, 597, 5, 7], [204, 529, 7, 4], [182, 539, 5, 4], [210, 539, 6, 4], [193, 583, 4, 7], [241, 641, 10, 4], [386, 568, 5, 8]]} />
    <Marker x={337} y={649} n={3} />

    {/* Detail 4 */}
    <Lines stroke={OLIVE} width={1.5} d="M822 299.500h164M806.500 311v55M999.500 311v56M822 338.500h164M770 367h37M999 367h37" />
    <Lines stroke={CYAN} width={1.5} d="M817.500 300v80M820.500 298v82M986 298v82M989 300v80M821 308.500h165M821 310.500h165M770 362v24M770 378h50M770 380.500h50M986 378h50M986 380.500h50M1036.500 361v25M900 309l3-3 3 3" />
    <Boxes list={[[806.5, 299.5, 11, 11], [806.5, 366.5, 11, 12], [988.5, 299.5, 11, 11], [988.5, 366.5, 11, 12]]} />
    <Lines stroke="#cf7c78" width={1.5} d="M862 294v50M866.500 294v50M939.500 294v50M944 295v49" />
    <Lines stroke={BROWN} d="M719 310.500h97M742.500 308v75M754.500 308v75M752 338.500h64M719 380.500h51M820.500 380v28M986 380v28M818 405.500h170" />
    <Leaders head="level" list={['M702 330.500h28v-19', 'M702 400.500h28v-19', 'M942 358.500h27v-20']} />
    <Leaders list={['M899 286h19.500v24', 'M953 290.500h15l17 18', 'M850 359.500h-31', 'M894 359.500h24.500v-21', 'M887 391.500h107v-20']} />
    <Blocks list={[
      [703, 325, 10, 4], [703, 331, 24, 3], [703, 395, 10, 4], [703, 402, 9, 3], [715, 402, 12, 3],
      [877, 283, 22, 5], [877, 288, 3, 3], [882, 288, 3, 3], [887, 288, 4, 3], [893, 288, 4, 3],
      [938, 286, 12, 3], [952, 286, 2, 3], [956, 286, 9, 3], [967, 286, 3, 3],
      [851, 356, 43, 4], [851, 361, 13, 3], [866, 361, 3, 3], [871, 361, 6, 3], [879, 361, 18, 3], [851, 365, 30, 4],
      [943, 353, 9, 4], [943, 358, 24, 3], [851, 389, 34, 4], [851, 393, 22, 4],
    ]} />
    <Blocks fill="#ffff00" list={[[737, 341, 4, 7], [750, 321, 4, 6], [750, 356, 4, 7], [899, 400, 9, 4]]} />
    <Marker x={740} y={415} n={4} />

    {/* Detail 6 */}
    <path d="M686 482h71v149h-21v-22h7v-56h-28v-52h-29z" fill="url(#stone)" stroke={MAGENTA} strokeDasharray="5 1" />
    <Lines stroke="#e02828" d="M715.500 440v28M757.500 440v28" />
    <Lines stroke={MAGENTA} width={1.5} d="M714 482v-14h44.500v14" />
    <Lines stroke="#6f8f78" d="M686 481.500h73v28" />
    <Lines stroke="#7b7b7b" d="M707 457l14 20M761 493l14 23M716 609l5 6M714 634l7-11" />
    <Lines stroke={BLUE} width={1.5} d="M704 439h61M686.500 473v82l-2 2h4l-2 2v73M737 589.500h28M737 591.500h12l2-3v6" />
    <Lines stroke="#dede2c" width={1.5} d="M686 617h50M686 620.500h50" />
    <Lines stroke={CYAN} width={2.5} d="M686 623.500h49" />
    <Lines stroke={BROWN} d="M764.500 467v43M761 467.500h5M761 481.500h5M761 509.500h5M732 636.500h26M732 640.500h26M735.500 631v10M757.500 631v10M764.500 623v9M761 624.500h5M761 631.500h5" />
    <Blocks list={[
      [688, 448, 19, 7], [690, 454, 16, 5], [728, 450, 12, 4], [728, 455, 4, 3], [733, 455, 8, 3], [728, 473, 12, 4],
      [728, 511, 14, 4], [774, 516, 18, 4], [774, 521, 18, 3], [775, 525, 16, 4],
      [696, 604, 12, 4], [710, 604, 14, 4], [696, 634, 15, 4], [714, 634, 8, 4],
    ]} />
    <Blocks fill="#ffff00" list={[[762, 472, 3, 4], [762, 493, 3, 3], [734, 632, 3, 3], [745, 633, 4, 3], [743, 637, 4, 3], [762, 626, 3, 3]]} />
    <Marker x={692} y={656} n={6} />

    {/* Detail 5 */}
    <Lines stroke={MAGENTA} width={1.5} d="M874 445v114M895 445v114" />
    <Lines stroke={BLUE} width={1.5} d={zig(873, 444) + zig(873, 559)} />
    <Lines stroke={CYAN} width={1.5} d="M896 495.500h118M903 501h111M901 503.500h113" />
    <circle cx="906" cy="516" r="17" fill="none" stroke={MAGENTA} strokeWidth="1.5" />
    <Lines stroke="#7b7b7b" d="M900 498l13-20h78M926 503l12 20h56" />
    <Lines stroke={BROWN} d="M890 516.500h16M895.500 511v8M900.500 508v10M895 498.500h6v5" />
    <Blocks fill="#ffff00" list={[[895, 509, 5, 5]]} />
    <text x="915" y="476" fontSize="8" fill={TEXT_GREEN}>PROFIL ALUMINIUM</text>
    <text x="939" y="522" fontSize="8" fill={TEXT_GREEN}>GYPSUM 9MM</text>
    <text transform="translate(886 552) rotate(-90)" fontSize="8" fill={TEXT_GREEN}>PARTISI PASANGAN BATA</text>
    <Marker x={926} y={563} n={5} />

    {/* Key plan */}
    <path d="M881 638h107v4H881z" fill="#a3a3a3" />
    <Lines stroke="#7b7b7b" d="M908 594v45M952.500 594v45" />
    <Lines stroke="#d9b27a" d="M908 613.500h44.500v3H908zM883 639h69M886 590h20" />
    <Lines stroke="#e02828" width={2} d="M880 585v59M880 587h26M881 592h101M914 591.500h68M988.500 596v46M991.500 596v46" />
    <Lines stroke="#5a2320" d="M882 588.500h22M879.500 641v3" />
    <Boxes stroke={MAGENTA} list={[[906, 585, 8, 8], [905, 639, 10, 5]]} />
    <Boxes stroke={BLUE} list={[[981.5, 586, 10, 10]]} />
    <circle cx="919" cy="651" r="3" fill="none" stroke={TEXT_GREEN} strokeWidth="2" />
    <Lines stroke={TEXT_GREEN} d="M925.500 636v14l-4 2M914 651h10" />

    {/* UCS icon */}
    <Lines stroke="#3a56d0" width={1.5} d="M13.500 721v68.500H53zM13 783.500h6v6" />
    <text x="14" y="751" fontSize="15" fill="#3a56d0">Y</text>
    <text x="35" y="788" fontSize="15" fill="#3a56d0">X</text>
  </g>
);

/* ---------- app ---------- */

const ribbonTabs = ['Home', 'Insert', 'Annotate', 'Parametric', 'View', 'Manage', 'Output', 'Add-ins', 'Collaborate', 'Express Tools', 'Featured Apps', 'Layout'];

const fileTabs = [
  ['Start', 99], ['Aksono metri furniture*', 132], ['art work padestal', 104], ['baground panel', 99],
  ['BED HEAD', 98], ['Bench*', 99], ['Ceiling Detail Dining Room', 146], ['Ceiling Detail Gues Room', 140],
  ['Ceiling Detail Living Room', 144], ['CREDENZA', 99], ['CREDENZA-2', 98], ['DAPUR', 98], ['Detail Ceiling', 99],
];

const Big = ({ icon, label, w, caret }) => (
  <BigTool $w={w}>
    <Icon name={icon} size={28} />
    <span>{label}</span>
    {caret && <Caret />}
  </BigTool>
);

const Small = ({ icon, label, caret, on }) => (
  <Tool $on={on} aria-label={label || icon}>
    <Icon name={icon} />
    {label}
    {caret && <Caret />}
  </Tool>
);

const Title = ({ children, plain, launcher }) => (
  <PanelTitle $launcher={launcher}>
    {children}
    {!plain && <Caret $size={3} />}
    {launcher && (
      <Launcher width="6" height="6">
        <path d="M1 1l4 4M5 1v4H1" fill="none" stroke="#eee" />
      </Launcher>
    )}
  </PanelTitle>
);

function App() {
  const [tab, setTab] = useState('Home');
  const [file, setFile] = useState('Detail Ceiling');
  const [command, setCommand] = useState('');

  return (
    <Page>
      <GlobalStyle />
      <Header>
        <AppButton aria-label="Application menu">
          <svg width="20" height="24" viewBox="0 0 20 24">
            <path d="M7 1h6l6 21h-5l-2-5-5 1-2 4H0z" fill="#c8202b" />
            <path d="M10 6l2 7-4 1z" fill="#a4a4a4" />
            <path d="M7 1L0 22h3L9 3zM12 17l7 5-5-9z" fill="#8f1219" />
          </svg>
          <Caret $size={3} $color="#222" />
        </AppButton>
        <TitleBar>
          <QuickAccess>
            {['newFile', 'open', 'save', 'saveAs', 'openWeb', 'saveWeb', 'plot', 'undo'].map((n) => (
              <QuickButton key={n} aria-label={n}><Icon name={n} /></QuickButton>
            ))}
            <QuickButton $narrow aria-label="Undo list"><Caret /></QuickButton>
            <QuickButton aria-label="redo"><Icon name="redo" /></QuickButton>
            <QuickButton $narrow aria-label="Redo list"><Caret /></QuickButton>
            <QuickButton $narrow aria-label="Customize"><Caret $size={3} $color="#fff" /></QuickButton>
          </QuickAccess>
          <WindowTitle>{'Autodesk AutoCAD 2019    Detail Ceiling.dwg'}</WindowTitle>
          <InfoCenter>
            <SearchToggle aria-label="Collapse search">▶</SearchToggle>
            <SearchInput aria-label="Search" placeholder="Type a keyword or phrase" />
            <InfoButton aria-label="Find"><Icon name="find" /></InfoButton>
            <InfoButton aria-label="Account"><Icon name="user" /></InfoButton>
            <SignIn>Sign In <Caret /></SignIn>
            <InfoButton $w={22} aria-label="Store"><Icon name="cart" /></InfoButton>
            <InfoButton $w={26} aria-label="App manager"><Icon name="a360" />&nbsp;<Caret /></InfoButton>
            <InfoButton $w={35} $h={15} $split aria-label="Help"><Icon name="help" /><Caret /></InfoButton>
          </InfoCenter>
          <WindowButtons>
            <button aria-label="Minimize"><svg width="10" height="10"><path d="M1 5.500h8" stroke="#eee" /></svg></button>
            <button aria-label="Restore"><svg width="10" height="10"><path d="M1.500 3.500h5v5h-5zM3 1.500h5.500V7" fill="none" stroke="#eee" /></svg></button>
            <button aria-label="Close"><svg width="10" height="10"><path d="M1 1l8 8M9 1L1 9" stroke="#eee" /></svg></button>
          </WindowButtons>
        </TitleBar>
        <RibbonTabs>
          {ribbonTabs.map((name) => (
            <RibbonTab key={name} $active={name === tab} $context={name === 'Layout'} onClick={() => setTab(name)}>
              {name}
            </RibbonTab>
          ))}
          <InfoButton $w={38} $h={16} aria-label="Minimize ribbon">
            <svg width="20" height="10">
              <rect x="1" y="2" width="11" height="6" rx="1" fill="#eee" />
              <path d="M4.500 6.500l2-3 2 3z" fill="#444" />
              <path d="M15 4h5l-2.500 3z" fill="#eee" />
            </svg>
          </InfoButton>
        </RibbonTabs>
      </Header>

      <Ribbon>
        <Panel $w={180}>
          <PanelBody>
            <Big icon="line" label="Line" w={33} />
            <Big icon="polyline" label="Polyline" w={37} />
            <Big icon="circle" label="Circle" w={42} caret />
            <Big icon="arc" label="Arc" w={31} caret />
            <ToolColumn $w={25} $ml={4}>
              <Small icon="rectangle" caret />
              <Small icon="ellipse" caret />
              <Small icon="hatch" caret />
            </ToolColumn>
          </PanelBody>
          <Title>Draw</Title>
        </Panel>

        <Panel $w={200}>
          <PanelBody>
            <ToolColumn $w={58} $ml={4}>
              <Small icon="move" label="Move" />
              <Small icon="copy" label="Copy" />
              <Small icon="stretch" label="Stretch" />
            </ToolColumn>
            <ToolColumn $w={55}>
              <Small icon="rotate" label="Rotate" />
              <Small icon="mirror" label="Mirror" />
              <Small icon="scale" label="Scale" />
            </ToolColumn>
            <ToolColumn $w={50}>
              <Small icon="trim" label="Trim" caret />
              <Small icon="fillet" label="Fillet" caret />
              <Small icon="array" label="Array" caret />
            </ToolColumn>
            <ToolColumn $w={18} $ml={10}>
              <Small icon="erase" />
              <Small icon="explode" />
              <Small icon="offset" />
            </ToolColumn>
          </PanelBody>
          <Title>Modify</Title>
        </Panel>

        <Panel $w={152}>
          <PanelBody>
            <Big icon="text" label="Text" w={36} caret />
            <Big icon="dimension" label="Dimension" w={49} />
            <ToolColumn $w={56} $ml={3}>
              <Small icon="linear" label="Linear" caret />
              <Small icon="leader" label="Leader" caret />
              <Small icon="table" label="Table" />
            </ToolColumn>
          </PanelBody>
          <Title>Annotation</Title>
        </Panel>

        <Panel $w={218}>
          <PanelBody>
            <Big icon="layerProps" label={'Layer\nProperties'} w={47} />
            <ToolColumn $w={166} $ml={1}>
              <Combo>
                <Icon name="bulb" size={12} />
                <Icon name="sun" size={12} />
                <Icon name="vpFreeze" size={12} />
                <Icon name="unlock" size={12} />
                <Swatch $color="#fff" />
                <select aria-label="Layer"><option>0</option></select>
                <Caret $size={3} />
              </Combo>
              <ToolRow>
                {['layIso', 'layMatch', 'layFreeze', 'layLock'].map((n) => <Small key={n} icon={n} />)}
                <Small icon="layMake" label="Make Current" />
              </ToolRow>
              <ToolRow>
                {['layOn', 'layMatch', 'layThaw', 'layUnlock'].map((n) => <Small key={n} icon={n} />)}
                <Small icon="layMatch2" label="Match Layer" />
              </ToolRow>
            </ToolColumn>
          </PanelBody>
          <Title>Layers</Title>
        </Panel>

        <Panel $w={129}>
          <PanelBody>
            <Big icon="insert" label="Insert" w={32} caret />
            <ToolColumn $w={88} $ml={3}>
              <Small icon="create" label="Create" />
              <Small icon="edit" label="Edit" />
              <Small icon="editAttr" label="Edit Attributes" caret />
            </ToolColumn>
          </PanelBody>
          <Title>Block</Title>
        </Panel>

        <Panel $w={212}>
          <PanelBody>
            <Big icon="matchProps" label={'Match\nProperties'} w={48} />
            <ToolColumn $w={16} $ml={1}>
              <Small icon="wheel" />
              <Small icon="weight" />
              <Small icon="ltype" />
            </ToolColumn>
            <ToolColumn $w={144}>
              <Combo $gap={8} $pl={9}>
                <Swatch $color="#2a0d09" />
                <select aria-label="Object color"><option>ByLayer</option></select>
                <Caret $size={3} />
              </Combo>
              <Combo $gap={2}>
                <Rule />
                <select aria-label="Lineweight"><option>ByLayer</option></select>
                <Caret $size={3} />
              </Combo>
              <Combo $gap={2}>
                <Rule />
                <select aria-label="Linetype"><option>ByLayer</option></select>
                <Caret $size={3} />
              </Combo>
            </ToolColumn>
          </PanelBody>
          <Title launcher>Properties</Title>
        </Panel>

        <Panel $w={55}>
          <PanelBody>
            <Big icon="group" label="Group" w={32} />
            <ToolColumn $w={18} $ml={1}>
              <Small icon="ungroup" />
              <Small icon="groupEdit" />
              <Small icon="groupPick" on />
            </ToolColumn>
          </PanelBody>
          <Title>Groups</Title>
        </Panel>

        <Panel $w={78}>
          <PanelBody>
            <Big icon="measure" label="Measure" w={54} caret />
            <ToolColumn $w={16} $ml={3}>
              <Small icon="quickSel" />
              <Small icon="selAll" />
              <Small icon="calc" />
            </ToolColumn>
          </PanelBody>
          <Title>Utilities</Title>
        </Panel>

        <Panel $w={64}>
          <PanelBody>
            <Big icon="paste" label="Paste" w={40} caret />
            <ToolColumn $w={16} $ml={3}>
              <Small icon="cut" />
              <Small icon="copyClip" />
            </ToolColumn>
          </PanelBody>
          <Title plain>Clipboard</Title>
        </Panel>

        <Panel $w={49}>
          <PanelBody>
            <Big icon="base" label="Base" w={47} caret />
          </PanelBody>
          <Title launcher>View</Title>
        </Panel>
      </Ribbon>

      <FileTabs>
        {fileTabs.map(([name, w]) => (
          <FileTab key={name} $w={w} $active={name === file}>
            <button onClick={() => setFile(name)}>{name}</button>
            {name !== 'Start' && <CloseTab aria-label={`Close ${name}`}>✕</CloseTab>}
          </FileTab>
        ))}
        <AddTab aria-label="New drawing">+</AddTab>
        <TabOverflow aria-label="More tabs"><Caret $size={3} $color="#c4c4c4" /><Caret $size={3} $color="#c4c4c4" /></TabOverflow>
      </FileTabs>

      <Workspace>
        <Drawing viewBox="0 138 1531 665" preserveAspectRatio="xMinYMin meet">
          <Sheets />
        </Drawing>
        <DocButtons>
          <button aria-label="Minimize drawing"><svg width="12" height="12"><path d="M1.500 6.500h9v3h-9z" fill="#fff" stroke="#444" /></svg></button>
          <button aria-label="Restore drawing"><svg width="12" height="12"><path d="M1.500 4h6v6h-6zM4 1.500h6.500V8" fill="none" stroke="#333" strokeWidth="3" /><path d="M2 4h6v6H2zM4 2h6.500v6" fill="none" stroke="#fff" /></svg></button>
          <button aria-label="Close drawing"><svg width="12" height="12"><path d="M2 2l8 8M10 2l-8 8" stroke="#333" strokeWidth="4" /><path d="M2.500 2.500l7 7M9.500 2.500l-7 7" stroke="#fff" strokeWidth="1.8" /></svg></button>
        </DocButtons>
        <NavBar>
          <svg width="25" height="105" fill="none" stroke="#868686" strokeWidth="1.3">
            <circle cx="20" cy="4.500" r="2.500" />
            <path d="M2 8.500h20M3 37.500h19M4 102.500h13" stroke="#868686" />
            <circle cx="12" cy="24" r="8" />
            <circle cx="12" cy="24" r="3.500" />
            <path d="M16 20v8h6v5h-8" />
            <path d="M7 55l-4-6 2-1 3 3-1-8 2-1 2 7V41h2l1 8 2-7h2l-1 8 3-4 2 1-4 8-3 4H9z" fill="#a6a6a6" />
            <path d="M4 65l14 14M16 65L4 77M4 68v-4h4M12 64h4v4M4 73v4h4" />
            <circle cx="17" cy="77" r="4" fill="#9a9a9a" />
            <path d="M20 80l3 3" strokeWidth="2.500" />
            <path d="M11 88h5l-2.500 3z" fill="#777" stroke="none" />
            <circle cx="20" cy="101" r="2.500" />
          </svg>
        </NavBar>
        <CommandDock>
          <History>
            <HistoryLine>Command:</HistoryLine>
            <HistoryLine>**** No System Variable Changed ****</HistoryLine>
            <HistoryLine $last>Command:</HistoryLine>
          </History>
          <CommandBar>
            <svg width="43" height="20">
              <path d="M3.500 3v14M5.500 3v14" stroke="#aaa" strokeDasharray="1 1" />
              <path d="M12 6.500l7 7M19 6.500l-7 7" stroke="#eee" strokeWidth="1.6" />
              <path d="M31 8l7 7" stroke="#eee" strokeWidth="2.4" />
              <path d="M28.500 7.500l3 1.500 1.500-1.500-1.500-3" fill="none" stroke="#eee" strokeWidth="1.8" />
            </svg>
            <CommandField>
              <svg width="18" height="12">
                <rect x="1" y="1" width="9" height="10" fill="#c4cdd4" stroke="#8a9298" />
                <path d="M2.500 3.500l2 2.500-2 2.500M6 9h3" fill="none" stroke="#444" />
                <path d="M13 4.500h5l-2.500 3z" fill="#777" />
              </svg>
              <input aria-label="Command" value={command} onChange={(e) => setCommand(e.target.value)} placeholder="Type a command" />
              <svg width="6" height="4"><path d="M0 4l3-4 3 4z" fill="#333" /></svg>
            </CommandField>
          </CommandBar>
        </CommandDock>
      </Workspace>

      <StatusBar>
        <StatusGroup>
          <LayoutTab>Model</LayoutTab>
          <LayoutTab $active>Layout1</LayoutTab>
          <LayoutTab>Layout2</LayoutTab>
          <LayoutTab aria-label="New layout">+</LayoutTab>
        </StatusGroup>
        <StatusGroup>
          <StatusButton $w={34}>PAPER</StatusButton>
          <StatusButton $w={20} aria-label="Grid"><svg width="12" height="14"><path d="M2.500 0v14" stroke="#ccc" /></svg></StatusButton>
          <StatusButton $on $w={17} aria-label="Snap"><svg width="14" height="14" fill="none" stroke="#fff"><circle cx="7" cy="8" r="5" /><path d="M7 8l6-6" /></svg></StatusButton>
          <StatusButton $w={15} aria-label="Snap options"><Caret /></StatusButton>
          <StatusButton $w={16} aria-label="Isodraft"><svg width="12" height="14"><path d="M1 2l9 10" stroke="#c55" /><path d="M8 2v6" stroke="#aaa" /></svg></StatusButton>
          <StatusButton $w={16} aria-label="Isodraft options"><Caret /></StatusButton>
          <StatusButton $on $w={18} aria-label="Tracking"><svg width="14" height="14"><path d="M2 12L12 2M3 8l1 4h5" fill="none" stroke="#fff" strokeWidth="1.5" /></svg></StatusButton>
          <StatusButton $on $w={19} aria-label="Object snap"><svg width="14" height="14"><path d="M2 2h4v4H2zM6 4h7v8H4" fill="none" stroke="#fff" /></svg></StatusButton>
          <StatusButton $w={16} aria-label="Object snap options"><Caret /></StatusButton>
          <StatusButton aria-label="Selection"><svg width="14" height="14"><path d="M2 3h10v8H2z" fill="none" stroke="#ccc" strokeDasharray="2 1" /><path d="M2 3l6 6" stroke="#ccc" /></svg></StatusButton>
          <StatusButton aria-label="Annotation visibility"><svg width="14" height="14"><path d="M1 12l4-9 4 9z" fill="#ccc" /><circle cx="10" cy="4" r="2" fill="none" stroke="#ccc" /></svg></StatusButton>
          <StatusButton aria-label="Auto scale"><svg width="14" height="14"><path d="M1 12l4-9 4 9zM9 1h3l-1 3h2l-4 5z" fill="#ccc" /></svg></StatusButton>
          <StatusButton aria-label="Workspace"><svg width="14" height="14"><circle cx="7" cy="7" r="3.500" fill="none" stroke="#ddd" strokeWidth="2.500" /><path d="M7 0v3M7 11v3M0 7h3M11 7h3M2 2l2 2M10 10l2 2M12 2l-2 2M4 10l-2 2" stroke="#ddd" strokeWidth="1.8" /></svg></StatusButton>
          <StatusButton $w={13} aria-label="Workspace options"><Caret /></StatusButton>
          <StatusButton aria-label="Annotation monitor"><svg width="14" height="14"><path d="M7 1v12M1 7h12" stroke="#ddd" strokeWidth="1.5" /></svg></StatusButton>
          <StatusButton aria-label="Isolate objects"><svg width="14" height="14"><path d="M1 2h5v5H1z" fill="none" stroke="#ccc" /><circle cx="10" cy="9" r="3" fill="none" stroke="#ccc" /></svg></StatusButton>
          <StatusButton aria-label="Hardware acceleration"><svg width="14" height="14"><circle cx="7" cy="7" r="5" fill="#4fb3d8" /><path d="M3 5h5v3H3z" fill="#eee" /></svg></StatusButton>
          <StatusButton $w={22} aria-label="Clean screen"><svg width="14" height="14"><path d="M1 3h12v8H1z" fill="none" stroke="#ddd" /><path d="M8 4h4v3z" fill="#ddd" /></svg></StatusButton>
          <StatusButton aria-label="Customization"><svg width="14" height="14"><path d="M1 4h12M1 7.500h12M1 11h12" stroke="#ddd" strokeWidth="1.5" /></svg></StatusButton>
        </StatusGroup>
      </StatusBar>

      <Balloon>
        <BalloonHead>3D Display Performance Notification <button aria-label="Close notification">✕</button></BalloonHead>
        <p>Enhanced 3D performance is not available for the current visual style.</p>
        <p>The required settings are listed here:</p>
        <a href="#visualstyles">VISUALSTYLES Command</a>
        <BalloonTail width="30" height="14">
          <path d="M2 0l22 13L14 0z" fill="#ffffe1" />
          <path d="M1 .5l23 13L14 .5" fill="none" stroke="#333" />
        </BalloonTail>
      </Balloon>
    </Page>
  );
}

export default App;
